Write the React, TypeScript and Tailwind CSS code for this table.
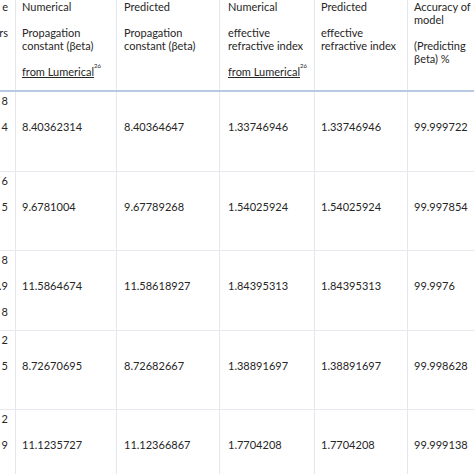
import React from 'react';

type Row = { lead: string[]; values: string[] };

const rows: Row[] = [
  { lead: ['8', '4', ''], values: ['8.40362314', '8.40364647', '1.33746946', '1.33746946', '99.999722'] },
  { lead: ['6', '5', ''], values: ['9.6781004', '9.67789268', '1.54025924', '1.54025924', '99.997854'] },
  { lead: ['8', '.9', '8'], values: ['11.5864674', '11.58618927', '1.84395313', '1.84395313', '99.9976'] },
  { lead: ['2', '5', ''], values: ['8.72670695', '8.72682667', '1.38891697', '1.38891697', '99.998628'] },
  { lead: ['2', '9', ''], values: ['11.1235727', '11.12366867', '1.7704208', '1.7704208', '99.999138'] },
];

const cols = 'grid grid-cols-[15px_101px_103px_95px_93px_140px]';
const pads = ['pl-[6px]', 'pl-[7px]', 'pl-[8px]', 'pl-[6px]', 'pl-[6px]'];

function Lead({ text }: { text: string }) {
  // first column is cut off by the crop: keep the tail end visible
  return (
    <div className="flex justify-end overflow-hidden whitespace-nowrap pr-[7px] h-[13px]">
      <span>{text}</span>
    </div>
  );
}

export default function App() {
  return (
    <div
      className="w-[474px] h-[474px] overflow-hidden bg-white text-[#262626] text-[11px] leading-[13px]"
      style={{ fontFamily: 'Lato, "Open Sans", sans-serif' }}
    >
      {/* Header */}
      <div className={`${cols} h-[92px] border-b-2 border-[#b7cae0]`}>
        <div className="overflow-hidden">
          <Lead text="e" />
          <div className="h-[13px]" />
          <Lead text="rs" />
        </div>
        <div className="border-l border-[#e4e8ee] pl-[6px]">
          <p className="mb-[13px]">Numerical</p>
          <p>Propagation</p>
          <p className="mb-[13px]">constant (βeta)</p>
          <p>
            <span className="underline">from Lumerical</span>
            <sup className="text-[6px] align-[5px]">26</sup>
          </p>
        </div>
        <div className="border-l border-[#e4e8ee] pl-[7px]">
          <p className="mb-[13px]">Predicted</p>
          <p>Propagation</p>
          <p>constant (βeta)</p>
        </div>
        <div className="border-l border-[#e4e8ee] pl-[8px]">
          <p className="mb-[13px]">Numerical</p>
          <p>effective</p>
          <p className="mb-[13px]">refractive index</p>
          <p>
            <span className="underline">from Lumerical</span>
            <sup className="text-[6px] align-[5px]">26</sup>
          </p>
        </div>
        <div className="border-l border-[#e4e8ee] pl-[6px]">
          <p className="mb-[13px]">Predicted</p>
          <p>effective</p>
          <p>refractive index</p>
        </div>
        <div className="border-l border-[#e4e8ee] pl-[6px] whitespace-nowrap">
          <p>Accuracy of DNN</p>
          <p className="mb-[13px]">model</p>
          <p>(Predicting</p>
          <p>βeta) %</p>
        </div>
      </div>

      {/* Body */}
      {rows.map((r, i) => (
        <div key={i} className={`${cols} h-[79.5px] border-b border-[#e6e9ee]`}>
          <div className="overflow-hidden pt-[2px] flex flex-col gap-[13px]">
            {r.lead.map((t, j) => (
              <Lead key={j} text={t} />
            ))}
          </div>
          {r.values.map((v, j) => (
            <div key={j} className={`border-l border-[#e4e8ee] pt-[28px] ${pads[j]}`}>
              {v}
            </div>
          ))}
        </div>
      ))}
    </div>
  );
}
